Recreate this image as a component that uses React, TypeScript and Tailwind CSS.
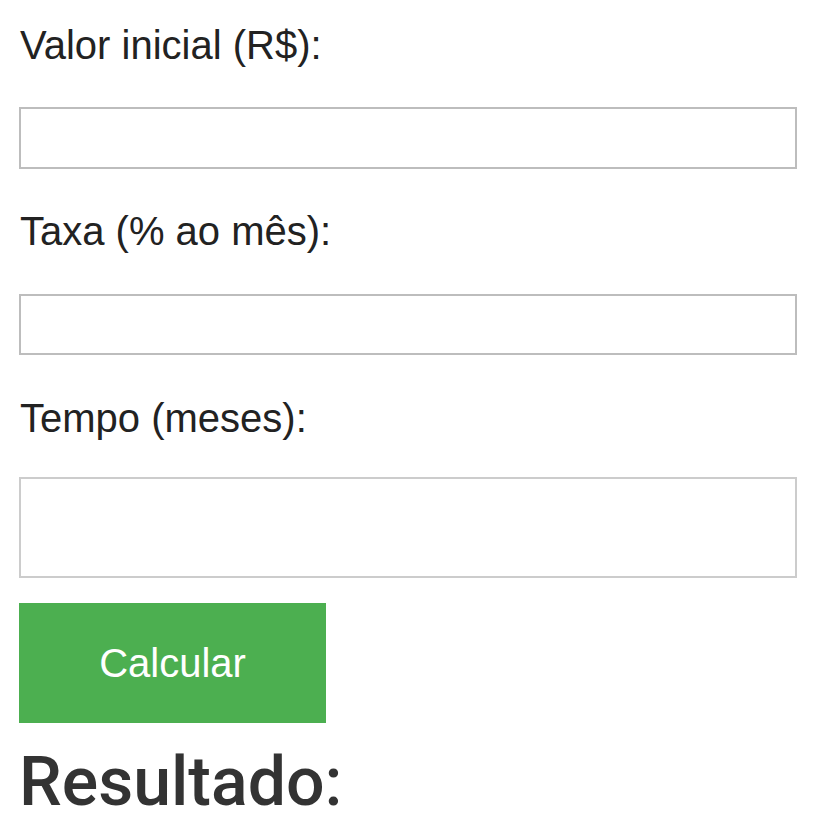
import { useState } from "react";

export default function App() {
  const [valor, setValor] = useState("");
  const [taxa, setTaxa] = useState("");
  const [tempo, setTempo] = useState("");

  return (
    <div className="min-h-screen bg-white px-[19px] pt-[22px] font-['Liberation_Sans',Arial,sans-serif] text-[#222]">
      <form
        onSubmit={(e) => e.preventDefault()}
        className="flex w-[778px] flex-col"
      >
        {/* Valor inicial */}
        <label className="block pl-px text-[40px] leading-[46px]">Valor inicial (R$):</label>
        <input
          type="number"
          value={valor}
          onChange={(e) => setValor(e.target.value)}
          className="mt-[39px] h-[62px] w-full border-2 border-[#bdbdbd] bg-white px-3 text-[28px] outline-none"
        />

        {/* Taxa */}
        <label className="mt-[39px] block pl-px text-[40px] leading-[46px]">Taxa (% ao mês):</label>
        <input
          type="number"
          value={taxa}
          onChange={(e) => setTaxa(e.target.value)}
          className="mt-[40px] h-[61px] w-full border-2 border-[#bdbdbd] bg-white px-3 text-[28px] outline-none"
        />

        {/* Tempo */}
        <label className="mt-[40px] block pl-px text-[40px] leading-[46px]">Tempo (meses):</label>
        <input
          type="number"
          value={tempo}
          onChange={(e) => setTempo(e.target.value)}
          className="mt-[36px] h-[101px] w-full border-2 border-[#cccccc] bg-white px-3 text-[28px] outline-none"
        />

        <button
          type="submit"
          className="mt-[25px] h-[120px] w-[307px] bg-[#4CAF50] text-[40px] text-white"
        >
          Calcular
        </button>
      </form>

      <h2 className="mt-[25px] font-['Roboto',sans-serif] text-[68px] leading-none font-medium text-[#333]">
        Resultado:
      </h2>
    </div>
  );
}
